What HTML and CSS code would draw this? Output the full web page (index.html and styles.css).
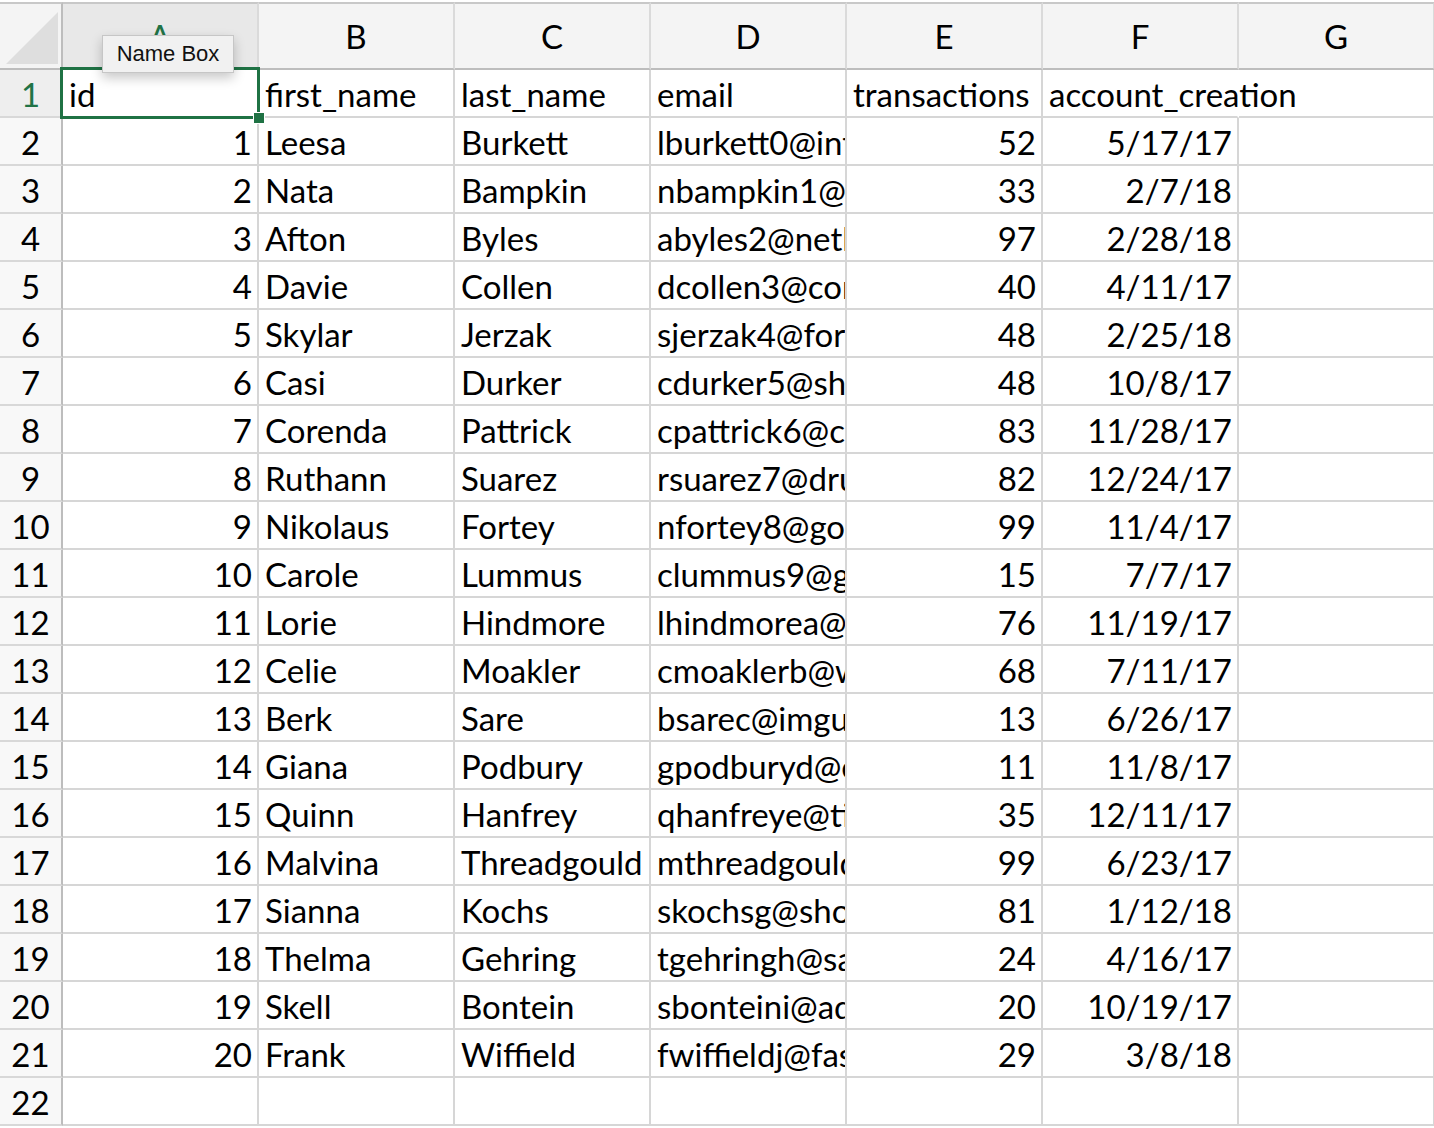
FILE: index.html
```html
<!DOCTYPE html>
<html>
<head>
<meta charset="utf-8">
<link rel="stylesheet" href="styles.css">
</head>
<body>
<div class="sheet">
  <div class="corner"><span class="tri"></span></div>
  <div class="ch sel">A</div>
  <div class="ch">B</div>
  <div class="ch">C</div>
  <div class="ch">D</div>
  <div class="ch">E</div>
  <div class="ch">F</div>
  <div class="ch">G</div>

  <div class="rh sel">1</div>
  <div class="c active">id<span class="handle"></span></div>
  <div class="c">first_name</div>
  <div class="c">last_name</div>
  <div class="c">email</div>
  <div class="c">transactions</div>
  <div class="c over">account_creation</div>
  <div class="c"></div>

  <div class="rh">2</div><div class="c n">1</div><div class="c">Leesa</div><div class="c">Burkett</div><div class="c">lburkett0@intel.com</div><div class="c n">52</div><div class="c n">5/17/17</div><div class="c"></div>
  <div class="rh">3</div><div class="c n">2</div><div class="c">Nata</div><div class="c">Bampkin</div><div class="c">nbampkin1@ebay.com</div><div class="c n">33</div><div class="c n">2/7/18</div><div class="c"></div>
  <div class="rh">4</div><div class="c n">3</div><div class="c">Afton</div><div class="c">Byles</div><div class="c">abyles2@netlog.com</div><div class="c n">97</div><div class="c n">2/28/18</div><div class="c"></div>
  <div class="rh">5</div><div class="c n">4</div><div class="c">Davie</div><div class="c">Collen</div><div class="c">dcollen3@com.com</div><div class="c n">40</div><div class="c n">4/11/17</div><div class="c"></div>
  <div class="rh">6</div><div class="c n">5</div><div class="c">Skylar</div><div class="c">Jerzak</div><div class="c">sjerzak4@forbes.com</div><div class="c n">48</div><div class="c n">2/25/18</div><div class="c"></div>
  <div class="rh">7</div><div class="c n">6</div><div class="c">Casi</div><div class="c">Durker</div><div class="c">cdurker5@shop-pro.jp</div><div class="c n">48</div><div class="c n">10/8/17</div><div class="c"></div>
  <div class="rh">8</div><div class="c n">7</div><div class="c">Corenda</div><div class="c">Pattrick</div><div class="c">cpattrick6@cdc.gov</div><div class="c n">83</div><div class="c n">11/28/17</div><div class="c"></div>
  <div class="rh">9</div><div class="c n">8</div><div class="c">Ruthann</div><div class="c">Suarez</div><div class="c">rsuarez7@drupal.org</div><div class="c n">82</div><div class="c n">12/24/17</div><div class="c"></div>
  <div class="rh">10</div><div class="c n">9</div><div class="c">Nikolaus</div><div class="c">Fortey</div><div class="c">nfortey8@google.com</div><div class="c n">99</div><div class="c n">11/4/17</div><div class="c"></div>
  <div class="rh">11</div><div class="c n">10</div><div class="c">Carole</div><div class="c">Lummus</div><div class="c">clummus9@github.com</div><div class="c n">15</div><div class="c n">7/7/17</div><div class="c"></div>
  <div class="rh">12</div><div class="c n">11</div><div class="c">Lorie</div><div class="c">Hindmore</div><div class="c">lhindmorea@xing.com</div><div class="c n">76</div><div class="c n">11/19/17</div><div class="c"></div>
  <div class="rh">13</div><div class="c n">12</div><div class="c">Celie</div><div class="c">Moakler</div><div class="c">cmoaklerb@wix.com</div><div class="c n">68</div><div class="c n">7/11/17</div><div class="c"></div>
  <div class="rh">14</div><div class="c n">13</div><div class="c">Berk</div><div class="c">Sare</div><div class="c">bsarec@imgur.com</div><div class="c n">13</div><div class="c n">6/26/17</div><div class="c"></div>
  <div class="rh">15</div><div class="c n">14</div><div class="c">Giana</div><div class="c">Podbury</div><div class="c">gpodburyd@ed.gov</div><div class="c n">11</div><div class="c n">11/8/17</div><div class="c"></div>
  <div class="rh">16</div><div class="c n">15</div><div class="c">Quinn</div><div class="c">Hanfrey</div><div class="c">qhanfreye@tiny.cc</div><div class="c n">35</div><div class="c n">12/11/17</div><div class="c"></div>
  <div class="rh">17</div><div class="c n">16</div><div class="c">Malvina</div><div class="c">Threadgould</div><div class="c">mthreadgouldf@php.net</div><div class="c n">99</div><div class="c n">6/23/17</div><div class="c"></div>
  <div class="rh">18</div><div class="c n">17</div><div class="c">Sianna</div><div class="c">Kochs</div><div class="c">skochsg@shop.com</div><div class="c n">81</div><div class="c n">1/12/18</div><div class="c"></div>
  <div class="rh">19</div><div class="c n">18</div><div class="c">Thelma</div><div class="c">Gehring</div><div class="c">tgehringh@salon.com</div><div class="c n">24</div><div class="c n">4/16/17</div><div class="c"></div>
  <div class="rh">20</div><div class="c n">19</div><div class="c">Skell</div><div class="c">Bontein</div><div class="c">sbonteini@adobe.com</div><div class="c n">20</div><div class="c n">10/19/17</div><div class="c"></div>
  <div class="rh">21</div><div class="c n">20</div><div class="c">Frank</div><div class="c">Wiffield</div><div class="c">fwiffieldj@fastco.com</div><div class="c n">29</div><div class="c n">3/8/18</div><div class="c"></div>
  <div class="rh">22</div><div class="c"></div><div class="c"></div><div class="c"></div><div class="c"></div><div class="c"></div><div class="c"></div><div class="c"></div>

  <div class="tooltip">Name Box</div>
</div>
</body>
</html>
```

FILE: styles.css
```css
html, body {
  margin: 0;
  padding: 0;
  background: #ffffff;
  overflow: hidden;
}

.sheet {
  position: relative;
  margin-top: 2px;
  display: grid;
  grid-template-columns: 63px repeat(7, 196px);
  grid-template-rows: 68px repeat(22, 48px);
  font-family: Lato, "Liberation Sans", sans-serif;
  font-size: 33px;
  color: #000;
  background: #ffffff;
}

.corner {
  position: relative;
  background: #f4f4f4;
  border-top: 2px solid #c8c8c8;
  border-bottom: 2px solid #bdbdbd;
  border-right: 2px solid #bdbdbd;
  box-sizing: border-box;
}

.tri {
  position: absolute;
  left: 6px;
  top: 8px;
  width: 52px;
  height: 52px;
  background: #dedede;
  clip-path: polygon(100% 0, 100% 100%, 0 100%);
}

.ch {
  background: #f4f4f4;
  border-top: 2px solid #c8c8c8;
  border-bottom: 2px solid #bdbdbd;
  border-right: 2px solid #dadada;
  box-sizing: border-box;
  text-align: center;
  line-height: 64px;
}

.ch.sel {
  background: #e8e8e8;
  color: #217346;
}

.rh {
  background: #f8f8f8;
  border-right: 2px solid #bdbdbd;
  border-bottom: 2px solid #d8d8d8;
  box-sizing: border-box;
  text-align: center;
  line-height: 48px;
}

.rh.sel {
  background: #eeeeee;
  color: #217346;
}

.c {
  border-right: 2px solid #d6d6d6;
  border-bottom: 2px solid #d6d6d6;
  box-sizing: border-box;
  padding: 0 5px 0 6px;
  white-space: nowrap;
  overflow: hidden;
  line-height: 48px;
}

.c.n {
  text-align: right;
}

.c.over {
  overflow: visible;
  border-right-color: transparent;
}

.c.active {
  position: relative;
  overflow: visible;
  z-index: 2;
}

.c.active::after {
  content: "";
  position: absolute;
  left: -3px;
  top: -3px;
  right: -3px;
  bottom: -3px;
  border: 3px solid #1f7244;
  pointer-events: none;
}

.handle {
  position: absolute;
  right: -8px;
  bottom: -8px;
  width: 10px;
  height: 10px;
  background: #1f7244;
  border: 1px solid #ffffff;
  z-index: 3;
}

.tooltip {
  position: absolute;
  left: 102px;
  top: 33px;
  width: 132px;
  height: 38px;
  box-sizing: border-box;
  background: #f1f1f1;
  border: 1px solid #c6c6c6;
  box-shadow: 0 5px 12px rgba(0, 0, 0, 0.22);
  font-family: "Liberation Sans", Arial, sans-serif;
  font-size: 22px;
  line-height: 36px;
  text-align: center;
  color: #111;
  z-index: 5;
}
```
